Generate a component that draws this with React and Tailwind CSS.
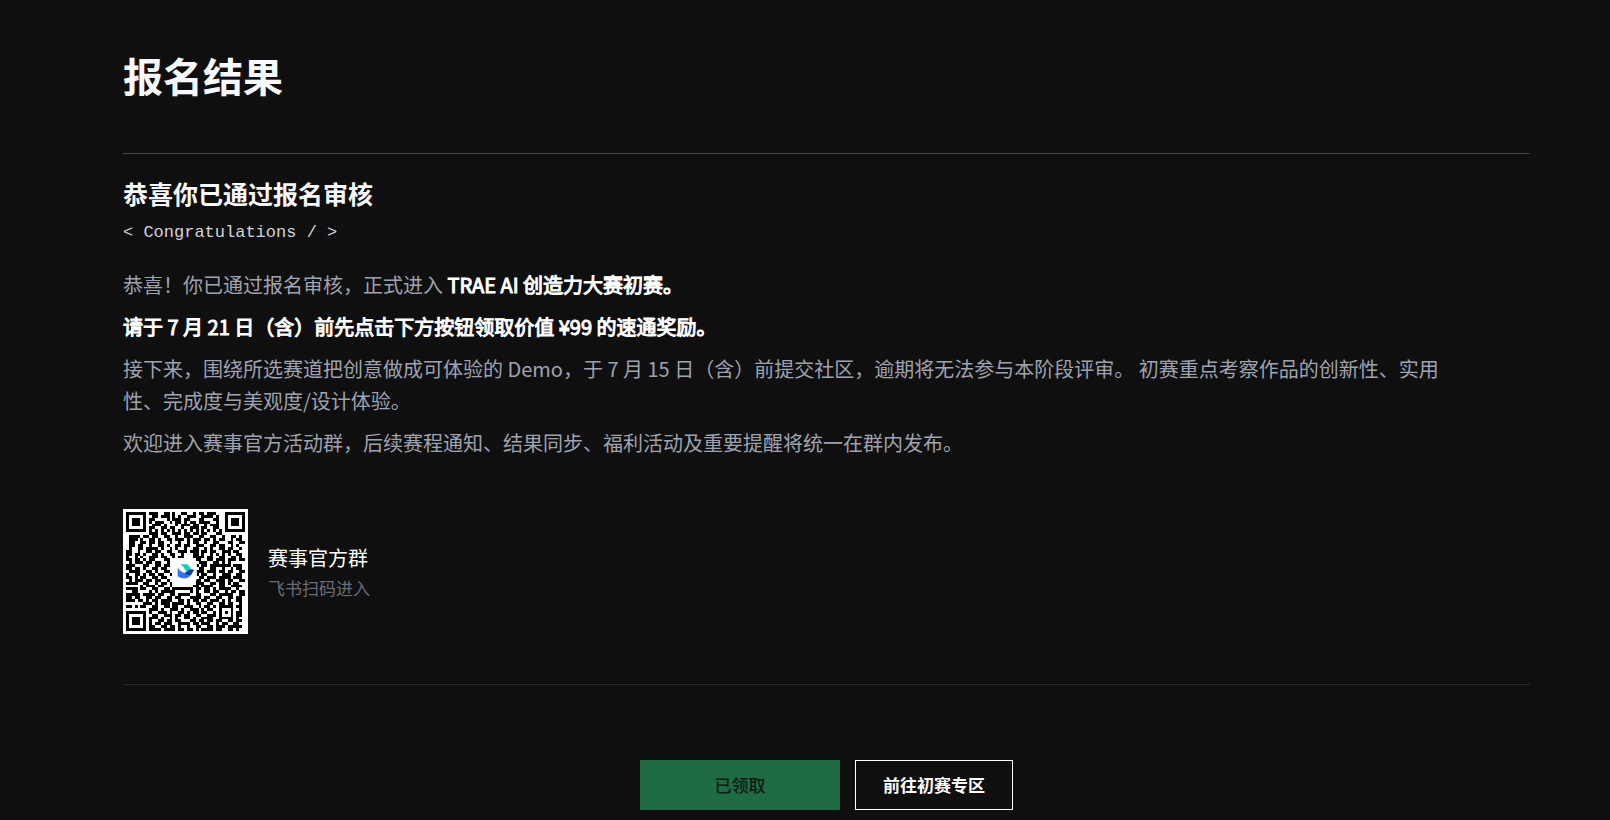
const QR_ROWS = [
  '#######.###..##.#..##..#.##.###...#######',
  '#.....#..##.###.#.#..###..####.#..#.....#',
  '#.###.#.##....#.###.##...##...##..#.###.#',
  '#.###.#.#.###..#.##.#.##.####..#..#.###.#',
  '#.###.#..###.#...#.###.##..#.###..#.###.#',
  '#.....#.##..##.##..#..###.##..##..#.....#',
  '#######.#.#.#.#.#.#.#.#.#.#.#.#.#.#######',
  '........###.##..###.##.##.##...##........',
  '.####.##.##..##..#..###..##..##..#..##.#.',
  '.###.#..##.#..##.###.#.###.##.#.##..#.##.',
  '.##..##.##.##..#..#..#.##..#..##...##..##',
  '.##.##..#..##.#..##.##..###..##.##..#.#..',
  '.#..##.####.#..#.#..#..##..#.#..##.##..#.',
  '##..#..##.##..##..###.###.##.##..###.##..',
  '##.##.#..##.#..##..#...##.#..#.#.#.#..##.',
  '#..#.#..###.##..#.##...####.##..##..##.#.',
  '##.##.#.##...##.........##..##.###.###.##',
  '.#.###.##.##..#..........###..##.#.#.....',
  '###...##..##.##.........#.##.#######.###.',
  '##.##.#..##.##...........##..##..#..#.##.',
  '.####..##.#..##.........###.###.##.##..##',
  '#..##.#.##.##..#........#.##..#..###..##.',
  '##.#.##..##.##...........##.###.####.###.',
  '.#.###.##.##..#.........##.##..###.##..##',
  '####..##..#.##.#........###..##.##.#.##..',
  '.....#.###.##..#.......##.####..##..####.',
  '####.##..##..##.#######.##.##.#.####..#..',
  '..##....#.#.#####.....#.#..##.##..#.##.##',
  '#####.####.##..##.####..##...##.#####..##',
  '##.##..##.##..##.##...####.##..##..##.##.',
  '###.##.#.##.####..##.#.##.##.###.#.#..##.',
  '......###.#.###.####.#..##..##..##.##..#.',
  '##.#.##..##..##.##..###..#.##.#.#####.##.',
  '........###.#..###.#..###.#.##..#...#..#.',
  '#######.#..###.#..##.#.##.##..#.#.#.#.##.',
  '#.....#..##..###.##.##..##..###.#...#.##.',
  '#.###.#.###.#..#.#..##.#..####..#####.#..',
  '#.###.#.#..##.##.##...##.##.##.##..##.##.',
  '#.###.#.#.##.###..####.##.###..#.##..##..',
  '#.....#.##..##.##.#..#..##..##.###.#####.',
  '#######.####.####.##.##.#.####.##..##.#..',
];

function QrCode() {
  const path = QR_ROWS.map((row, y) =>
    [...row].map((cell, x) => (cell === '#' ? `M${x} ${y}h1v1h-1z` : '')).join('')
  ).join('');
  return (
    <svg viewBox="-1 -1 43 43" className="size-[125px] shrink-0 bg-white" role="img" aria-label="赛事官方群">
      <path d={path} fill="#000" shapeRendering="crispEdges" />
      <rect x="16.4" y="16.4" width="8" height="8" rx="1.6" fill="#fff" />
      <g transform="translate(-0.4 -0.2)">
        <path d="M19.2 18.2h2.300c.8.6 1.300 1.500 1.500 2.300l-1.300 1c-.6-1.200-1.500-2.400-2.500-3.300z" fill="#00d6b9" />
        <path d="M18.200 19.400v2.900c1.600 1.100 3.600 1 4.700-.5.500-.6.600-1.200 1-1.600-1.100-.5-1.900-.1-2.500.6-.8.700-1.900.2-3.200-1.400z" fill="#3370ff" />
        <path d="M20.700 21.400c.7-1 1.700-1.700 3.100-1.200-.4.400-.6 1-1 1.600-.6.300-1.300.200-2.100-.4z" fill="#133c9a" />
      </g>
    </svg>
  );
}

export default function App() {
  return (
    <main
      lang="zh-CN"
      className="min-h-screen bg-[#0f0f0f] pt-[45px] pr-20 pb-[10px] pl-[123px] font-['Noto_Sans_CJK_SC',sans-serif] text-xl leading-8 text-[#9fa3b0]"
    >
      <h1 className="pb-12 text-[40px] leading-[60px] font-bold text-[#f7f8fc]">报名结果</h1>

      <section className="border-y border-t-[#404040] border-b-[#2b2b2b] pt-[23px] pb-[50px]">
        <h2 className="text-[25px] leading-8 font-bold text-[#f7f8fc]">恭喜你已通过报名审核</h2>
        <p className="mt-1.5 font-['Liberation_Mono',monospace] text-[17px] leading-9 text-[#d1d3db]">
          {'< Congratulations / >'}
        </p>

        <div className="mt-[18px] mr-20 space-y-[10px]">
          <p>
            恭喜！你已通过报名审核，正式进入{' '}
            <strong className="font-normal text-white [-webkit-text-stroke:1px_white]">TRAE AI 创造力大赛初赛。</strong>
          </p>
          <p>
            <strong className="font-normal text-white [-webkit-text-stroke:1px_white]">
              请于 7 月 21 日（含）前先点击下方按钮领取价值 ¥99 的速通奖励。
            </strong>
          </p>
          <p>
            接下来，围绕所选赛道把创意做成可体验的 Demo，于 7 月 15 日（含）前提交社区，逾期将无法参与本阶段评审。
            {' '}初赛重点考察作品的创新性、实用性、完成度与美观度/设计体验。
          </p>
          <p>欢迎进入赛事官方活动群，后续赛程通知、结果同步、福利活动及重要提醒将统一在群内发布。</p>
        </div>

        <div className="mt-[50px] flex items-center gap-5">
          <QrCode />
          <div>
            <p className="text-white">赛事官方群</p>
            <p className="text-[17px] leading-7 text-[#6b6e7a]">飞书扫码进入</p>
          </div>
        </div>
      </section>

      <div className="mt-[75px] flex justify-center gap-[15px] text-[17px]">
        <button type="button" disabled className="h-[50px] w-[200px] bg-[#1f6b43] font-medium text-[#0f1a14]">
          已领取
        </button>
        <button type="button" className="h-[50px] border border-white px-[27px] font-bold text-white">
          前往初赛专区
        </button>
      </div>
    </main>
  );
}
